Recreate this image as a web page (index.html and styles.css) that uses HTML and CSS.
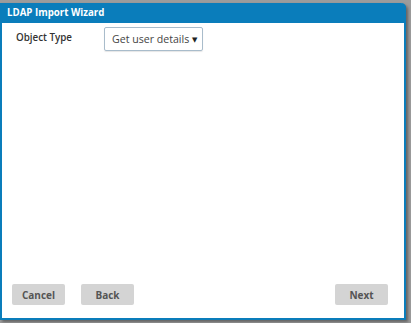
FILE: index.html
```html
<!DOCTYPE html>
<html>
<head>
<meta charset="utf-8">
<link rel="stylesheet" href="styles.css">
</head>
<body>
<div class="dialog">
  <div class="header">LDAP Import Wizard</div>
  <div class="content">
    <div class="row">
      <span class="label">Object Type</span>
      <div class="select">Get user details <span class="caret">▼</span></div>
    </div>
  </div>
  <div class="footer">
    <div class="left">
      <button class="btn">Cancel</button>
      <button class="btn">Back</button>
    </div>
    <button class="btn">Next</button>
  </div>
</div>
</body>
</html>
```
FILE: styles.css
```css
html, body {
  margin: 0;
  padding: 0;
  width: 411px;
  height: 323px;
  overflow: hidden;
  background: #9c9c9c;
  font-family: "Open Sans", "DejaVu Sans", sans-serif;
}
.dialog {
  margin-top: 3px;
  width: 402px;
  height: 315px;
  border: 2px solid #0a7dbb;
  border-top: 0;
  border-radius: 0 5px 0 0;
  background: #fff;
  display: flex;
  flex-direction: column;
  box-shadow: 2px 2px 3px rgba(60,60,60,0.6);
}
.header {
  background: #0a7dbb;
  color: #fff;
  font-weight: 700;
  font-size: 9.7px;
  height: 20px;
  line-height: 20px;
  border-radius: 0 5px 0 0;
  margin: 0 -2px 0 -2px;
  padding-left: 7px;
}
.content {
  flex: 1;
  padding: 4px 0 0 14px;
}
.row {
  display: flex;
  align-items: flex-start;
}
.label {
  font-size: 9.8px;
  font-weight: 600;
  color: #333;
  width: 88px;
  margin-top: 4px;
}
.select {
  box-sizing: border-box;
  width: 99px;
  height: 24px;
  border: 1px solid #a9bccb;
  border-radius: 2px;
  font-size: 10.6px;
  color: #444;
  line-height: 22px;
  padding-left: 7px;
  white-space: nowrap;
  box-shadow: 0 1px 1px rgba(0,0,0,0.1);
}
.caret {
  font-size: 7px;
  color: #222;
  vertical-align: 1px;
}
.footer {
  display: flex;
  justify-content: space-between;
  padding: 0 16px 13px 10px;
}
.left {
  display: flex;
  gap: 16px;
}
.btn {
  width: 53px;
  height: 21px;
  border: 0;
  border-radius: 2px;
  background: #d4d4d4;
  color: #555;
  font-family: "Open Sans", "DejaVu Sans", sans-serif;
  font-weight: 700;
  font-size: 10px;
  padding: 0;
}
```
